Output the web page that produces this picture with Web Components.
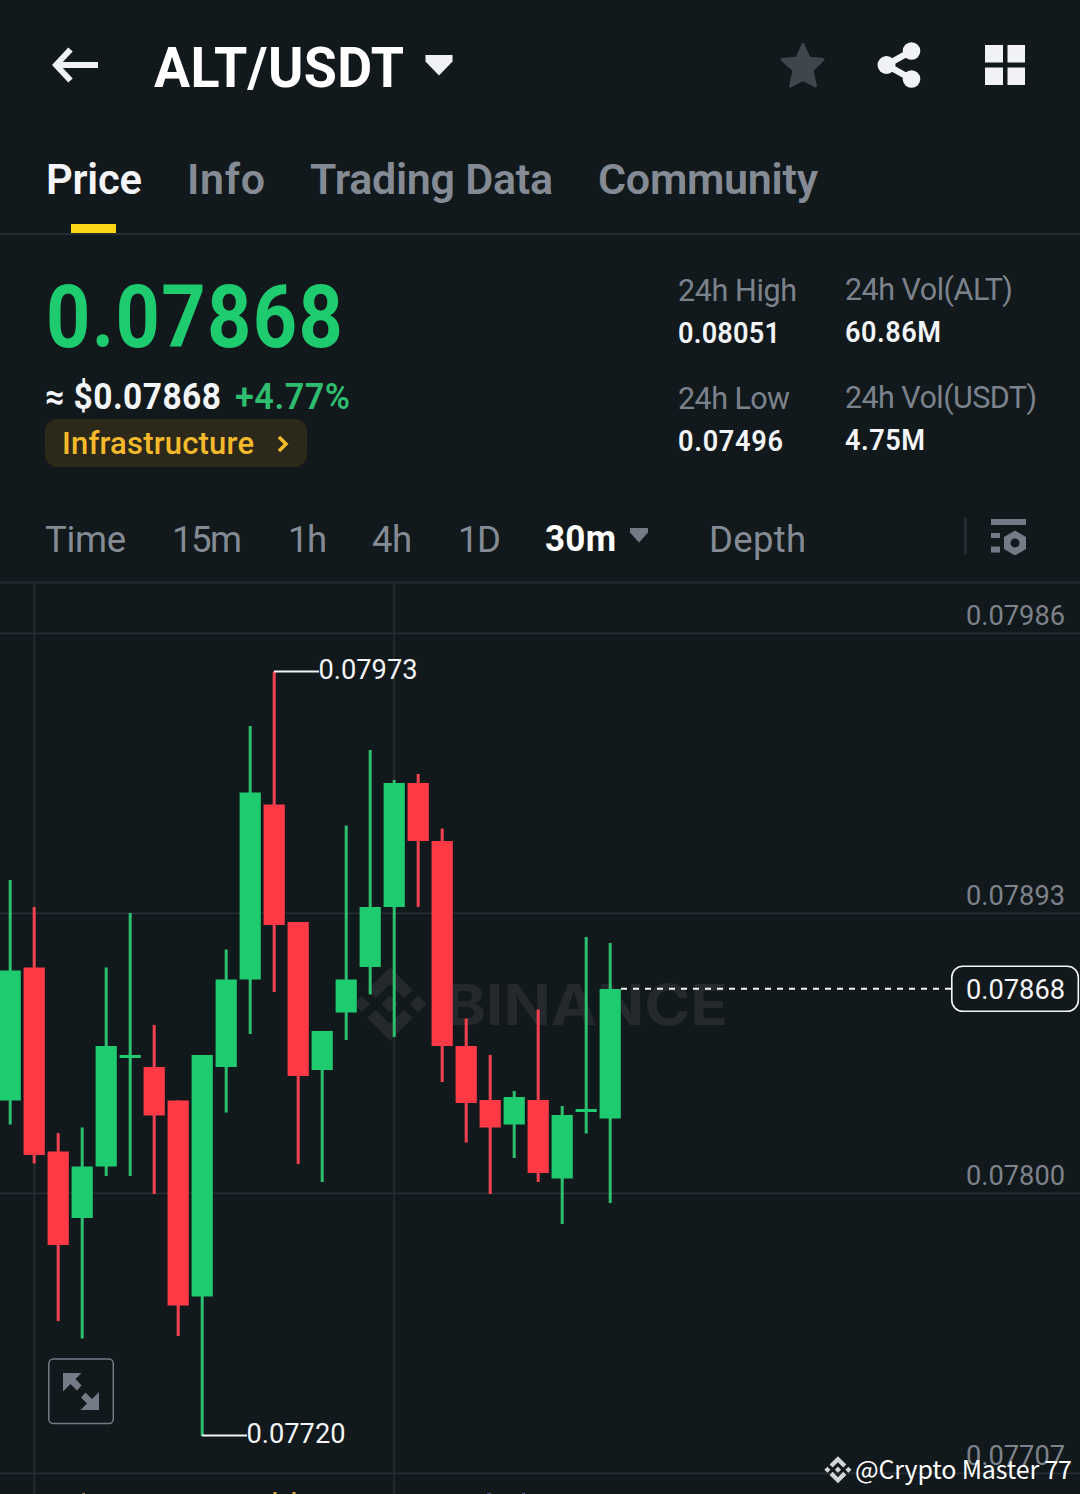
<!DOCTYPE html>
<html lang="en">
<head>
<meta charset="utf-8">
<title>ALT/USDT</title>
<style>
  body {
    margin: 0;
    background: #12191c;
    color: #f4f5f8;
    font-family: Roboto, "Liberation Sans", sans-serif;
  }
</style>
</head>
<body>
<market-page></market-page>

<script>
// Keeps a text on one line and tracks its letters to fill the given width.
// The squeeze attribute narrows the glyphs first.
class FitLabel extends HTMLElement {
  constructor() {
    super();
    const template = document.createElement('template');
    template.innerHTML = `
    <style>
      :host { display: block; white-space: nowrap; line-height: 1; }
      span { display: inline-block; transform-origin: left; }
    </style>
    <span><slot></slot></span>
    `;
    this.attachShadow({ mode: 'open' });
    this.shadowRoot.appendChild(template.content.cloneNode(true));
  }

  connectedCallback() {
    const width = Number(this.getAttribute('width'));
    const squeeze = Number(this.getAttribute('squeeze') || 1);
    const span = this.shadowRoot.querySelector('span');
    const natural = span.getBoundingClientRect().width;
    const count = this.textContent.length;
    span.style.letterSpacing = (width / squeeze - natural) / (count - 1) + 'px';
    span.style.transform = `scaleX(${squeeze})`;
    this.style.width = width + 'px';
  }
}

class MarketHeader extends HTMLElement {
  constructor() {
    super();
    const template = document.createElement('template');
    template.innerHTML = `
    <style>
      :host {
        display: flex;
        align-items: center;
        height: 130px;
        padding: 0 54px 0 52px;
      }
      svg { display: block; fill: #f1f2f7; }
      fit-label { font-size: 56px; font-weight: 700; color: #fff; margin: 5px 21px 0 56px; }
      .actions { display: flex; align-items: center; margin-left: auto; gap: 52px; }
    </style>
    <svg width="46" height="36" viewBox="0 0 46 36">
      <path d="M18.500 2.500 4 18l14.500 15.500M4.500 18H46" fill="none" stroke="#f1f2f7" stroke-width="6"/>
    </svg>
    <fit-label width="250" squeeze=".96">ALT/USDT</fit-label>
    <svg width="28" height="22" viewBox="0 0 28 22"><path d="M.5 1h27v6.500L14 21.500.5 7.500z"/></svg>
    <div class="actions">
      <svg width="46" height="46" viewBox="0 0 46 46">
        <path d="M24 2.500l6 13.500 14 1.500-11 11 3.500 15.500L24 37.500 11.500 44 15 28.500 3 17.500 18 16z" fill="#3f464d" stroke="#3f464d" stroke-width="3" stroke-linejoin="round"/>
      </svg>
      <svg width="44" height="46" viewBox="0 0 44 46">
        <path d="M34.500 9 9.500 23l25 14" fill="none" stroke="#f1f2f7" stroke-width="6.500"/>
        <circle cx="34.500" cy="9" r="8.800"/><circle cx="9.500" cy="23" r="9"/><circle cx="34.500" cy="37" r="8.800"/>
      </svg>
      <svg width="42" height="40" viewBox="0 0 42 40" style="margin-left:11px">
        <path d="M1 0h18v17.500H1zM23.500 0h17.500v17.500H23.500zM1 22.500h18V40H1zM23.500 22.500h17.500V40H23.500z"/>
      </svg>
    </div>
    `;
    this.attachShadow({ mode: 'open' });
    this.shadowRoot.appendChild(template.content.cloneNode(true));
  }
}

class MarketTabs extends HTMLElement {
  constructor() {
    super();
    const template = document.createElement('template');
    template.innerHTML = `
    <style>
      :host {
        display: flex;
        box-sizing: border-box;
        height: 105px;
        padding: 28px 0 0 46px;
        gap: 45px;
        border-bottom: 2px solid #272e32;
        font-size: 43px;
        font-weight: 600;
        color: #848b94;
      }
      .tab { display: flex; flex-direction: column; align-items: center; justify-content: space-between; }
      .active { color: #f4f5f8; }
      .active::after { content: ""; width: 45px; height: 9px; margin-right: 2px; background: #fcd515; }
    </style>
    <div class="tab active"><fit-label width="96" squeeze=".97">Price</fit-label></div>
    <div class="tab"><fit-label width="78">Info</fit-label></div>
    <div class="tab"><fit-label width="243">Trading Data</fit-label></div>
    <div class="tab"><fit-label width="220">Community</fit-label></div>
    `;
    this.attachShadow({ mode: 'open' });
    this.shadowRoot.appendChild(template.content.cloneNode(true));
  }
}

class StatItem extends HTMLElement {
  constructor() {
    super();
    const template = document.createElement('template');
    template.innerHTML = `
    <style>
      :host { display: flex; flex-direction: column; gap: 12px; height: 108px; box-sizing: border-box; }
      ::slotted([slot=label]) { font-size: 30.500px; color: #7c828b; }
      ::slotted([slot=value]) { font-size: 29.500px; font-weight: 600; color: #f4f5f8; }
    </style>
    <slot name="label"></slot>
    <slot name="value"></slot>
    `;
    this.attachShadow({ mode: 'open' });
    this.shadowRoot.appendChild(template.content.cloneNode(true));
  }
}

class PriceSummary extends HTMLElement {
  constructor() {
    super();
    const template = document.createElement('template');
    template.innerHTML = `
    <style>
      :host {
        display: flex;
        justify-content: space-between;
        box-sizing: border-box;
        height: 263px;
        padding: 37px 43px 0 45px;
      }
      .last { font-size: 87px; font-weight: 700; color: #1ecb6e; padding: 2px 0 0 1px; }
      .fiat { display: flex; gap: 14px; margin-top: 18px; font-size: 36px; font-weight: 700; }
      .change { color: #2ebd6e; font-weight: 600; }
      .tag {
        display: flex;
        align-items: center;
        box-sizing: border-box;
        width: 262px;
        height: 48px;
        margin-top: 4px;
        padding: 1px 18px 0 17px;
        justify-content: space-between;
        border-radius: 12px;
        background: #2c291a;
        color: #f5b92c;
        font-size: 31px;
        font-weight: 500;
      }
      .stats { display: flex; gap: 48px; padding-top: 4px; }
      .second { margin-top: -1px; }
    </style>
    <div>
      <fit-label class="last" width="297" squeeze=".89">0.07868</fit-label>
      <div class="fiat">
        <fit-label width="176" squeeze=".93">≈ $0.07868</fit-label>
        <fit-label class="change" width="115" squeeze=".95">+4.77%</fit-label>
      </div>
      <div class="tag">
        <fit-label width="192">Infrastructure</fit-label>
        <svg width="12" height="18" viewBox="0 0 12 18"><path d="M2 2l7 7-7 7" fill="none" stroke="#f5b92c" stroke-width="3.500"/></svg>
      </div>
    </div>
    <div class="stats">
      <div>
        <stat-item><fit-label slot="label" width="119">24h High</fit-label><fit-label slot="value" width="102" squeeze=".92">0.08051</fit-label></stat-item>
        <stat-item><fit-label slot="label" width="112">24h Low</fit-label><fit-label slot="value" width="105" squeeze=".92">0.07496</fit-label></stat-item>
      </div>
      <div class="second">
        <stat-item><fit-label slot="label" width="168">24h Vol(ALT)</fit-label><fit-label slot="value" width="96" squeeze=".92">60.86M</fit-label></stat-item>
        <stat-item><fit-label slot="label" width="192">24h Vol(USDT)</fit-label><fit-label slot="value" width="80" squeeze=".92">4.75M</fit-label></stat-item>
      </div>
    </div>
    `;
    this.attachShadow({ mode: 'open' });
    this.shadowRoot.appendChild(template.content.cloneNode(true));
  }
}

class IntervalBar extends HTMLElement {
  constructor() {
    super();
    const template = document.createElement('template');
    template.innerHTML = `
    <style>
      :host {
        display: flex;
        align-items: center;
        box-sizing: border-box;
        height: 86px;
        padding: 0 54px 3px 45px;
        border-bottom: 3px solid #1f262b;
        font-size: 36.500px;
        color: #848b94;
      }
      fit-label { margin-right: 46px; padding-top: 5px; }
      .active { color: #fff; font-weight: 700; margin-right: 13px; padding-top: 3px; }
      .caret { margin: -5px 60px 0 0; }
      .rule { width: 3px; height: 36px; margin: -4px 24px 0 auto; background: #262c31; }
      .settings { margin-top: -3px; }
      svg { fill: #747a86; }
    </style>
    <fit-label width="81">Time</fit-label>
    <fit-label width="70" style="margin-right:46px">15m</fit-label>
    <fit-label width="39" style="margin-right:45px">1h</fit-label>
    <fit-label width="40" style="margin-right:46px">4h</fit-label>
    <fit-label width="43" style="margin-right:44px">1D</fit-label>
    <fit-label class="active" width="71" squeeze=".96">30m</fit-label>
    <svg class="caret" width="20" height="15" viewBox="0 0 20 15"><path d="M1 0h18v4.500L10 14.500 1 4.500z"/></svg>
    <fit-label width="97">Depth</fit-label>
    <div class="rule"></div>
    <svg class="settings" width="35" height="36" viewBox="0 0 35 36">
      <path d="M0 0h35v6H0zM0 14h9v5H0zM0 27.500h9v6H0z"/>
      <path fill-rule="evenodd" d="M24 11.500 35 18v12l-11 6.500L13 30V18zM24 19.500a4.500 4.500 0 1 0 0 9 4.500 4.500 0 1 0 0-9z"/>
    </svg>
    `;
    this.attachShadow({ mode: 'open' });
    this.shadowRoot.appendChild(template.content.cloneNode(true));
  }
}

// [high, body top, body bottom, low, colour], in chart y units, one every 24px
const CANDLES = [
  [880, 970.5, 1100.5, 1124.5, 'up'],
  [907, 967.5, 1155, 1163.5, 'down'],
  [1133, 1151.5, 1245, 1321, 'down'],
  [1127.5, 1166.5, 1218, 1338.5, 'up'],
  [967.5, 1046, 1166.5, 1176, 'up'],
  [913, 1055, 1058, 1176, 'up'],
  [1025, 1067, 1115.5, 1194, 'down'],
  [1100.5, 1100.5, 1305.5, 1336, 'down'],
  [1055, 1055, 1296.5, 1436, 'up'],
  [949.5, 979.5, 1067, 1112.5, 'up'],
  [726, 792.5, 979.5, 1034, 'up'],
  [671.5, 804.5, 925, 992, 'down'],
  [922, 922, 1076, 1164, 'down'],
  [1031, 1031, 1070, 1182, 'up'],
  [825.5, 979.5, 1012.5, 1040, 'up'],
  [750, 907, 967, 994.5, 'up'],
  [780, 783, 907, 1037, 'up'],
  [774, 783, 841, 907, 'down'],
  [828.5, 841, 1046, 1082, 'down'],
  [1018.5, 1046, 1103, 1142.5, 'down'],
  [1055, 1100, 1127.5, 1194, 'down'],
  [1091, 1097, 1124.5, 1158, 'up'],
  [1009.5, 1100, 1173, 1182, 'down'],
  [1106, 1115, 1178.5, 1224, 'up'],
  [937, 1109, 1112, 1133.5, 'up'],
  [943, 989, 1118.5, 1203, 'up'],
];

// Diamond mark on a 126 unit box
const MARK = 'M38.700 53.200 63 28.900l24.400 24.400 14.100-14.200L63 .6 24.500 39.100zM.6 63l14.200-14.200L28.900 63 14.800 77.200zM38.700 72.800 63 97.100l24.400-24.400 14.100 14.200L63 125.400 24.500 86.900zM97.100 63l14.200-14.200L125.400 63l-14.100 14.200zM77.400 63 63 48.600 48.600 63 63 77.400z';

class CandleChart extends HTMLElement {
  constructor() {
    super();
    const candles = CANDLES.map(([high, top, bottom, low, dir], i) => {
      const x = 10.2 + i * 24;
      return `<g class="${dir}">
        <rect class="wick" x="${x - 1.5}" y="${high}" width="3" height="${low - high}"/>
        <rect x="${x - 10.6}" y="${top}" width="21.200" height="${bottom - top}"/>
      </g>`;
    }).join('');
    const axis = ['0.07986', '0.07893', '0.07800', '0.07707'].map((price, i) =>
      `<text class="axis" x="966" y="${625 + i * 280}" textLength="99" lengthAdjust="spacingAndGlyphs">${price}</text>`).join('');

    const template = document.createElement('template');
    template.innerHTML = `
    <style>
      :host { display: block; height: 910px; }
      svg { display: block; }
      text { font-size: 27.700px; fill: #f4f5f8; }
      .grid { stroke: #272d32; stroke-width: 1.700; }
      .axis { fill: #7d828a; }
      .mark { fill: #25292d; }
      .brand { font-family: Inter, sans-serif; font-weight: 700; font-size: 57px; fill: #25292d; }
      .up { fill: #1ecb6e; }
      .down { fill: #ff3a46; }
      .up .wick { fill: #2dc071; }
      .down .wick { fill: #f3414d; }
      .lead { stroke: #f4f5f8; stroke-width: 2; }
      .credit { font-family: "Noto Sans CJK SC", sans-serif; font-size: 25px; fill: #fff; }
    </style>
    <svg width="1080" height="910" viewBox="0 584 1080 910">
      <path class="grid" d="M34.300 584v910M394.200 584v910M0 633.300h1080M0 913.300h1080M0 1193.300h1080M0 1473.300h1080"/>
      <path class="mark" transform="translate(353 967) scale(.587)" d="${MARK}"/>
      <text class="brand" x="445" y="1024.500" textLength="283" lengthAdjust="spacingAndGlyphs">BINANCE</text>
      ${candles}
      ${axis}
      <path class="lead" d="M274 671.500h45M202 1435.500h45"/>
      <text x="318.500" y="679" textLength="99" lengthAdjust="spacingAndGlyphs">0.07973</text>
      <text x="246.500" y="1443" textLength="99" lengthAdjust="spacingAndGlyphs">0.07720</text>
      <path class="lead" stroke-dasharray="6 6" d="M621 988.700h330"/>
      <rect x="951.800" y="966.300" width="126.500" height="45" rx="11" fill="#12191c" stroke="#f4f5f8" stroke-width="1.600"/>
      <text x="966" y="999" textLength="99" lengthAdjust="spacingAndGlyphs">0.07868</text>

      <rect x="48.800" y="1359" width="64.500" height="64.500" rx="4.500" fill="none" stroke="#747a86" stroke-width="1.500"/>
      <g fill="#747a86">
        <path d="M63 1373h18.500l-6 6 6 6.500-4.500 5-6.500-6.500-7.500 7.500z"/>
        <path d="M99 1410H80.500l6.500-6.500-6-6 4.500-5 6.500 6.500 7-7z"/>
      </g>

      <path d="M82 1493.500h3" stroke="#8a8450" stroke-width="1"/>
      <path d="M273.500 1493h3M292.500 1493h3" stroke="#e0a53a" stroke-width="2"/>
      <path d="M487 1493.500h4M522 1493.500h3" stroke="#5b5590" stroke-width="1"/>

      <path transform="translate(824.200 1456) scale(.218)" fill="#d3d4d6" d="${MARK}"/>
      <text class="credit" x="855" y="1479" textLength="217">@Crypto Master 77</text>
    </svg>
    `;
    this.attachShadow({ mode: 'open' });
    this.shadowRoot.appendChild(template.content.cloneNode(true));
  }
}

class MarketPage extends HTMLElement {
  constructor() {
    super();
    const template = document.createElement('template');
    template.innerHTML = `
    <style>
      :host { display: flex; flex-direction: column; width: 1080px; height: 1494px; overflow: hidden; }
    </style>
    <market-header></market-header>
    <market-tabs></market-tabs>
    <price-summary></price-summary>
    <interval-bar></interval-bar>
    <candle-chart></candle-chart>
    `;
    this.attachShadow({ mode: 'open' });
    this.shadowRoot.appendChild(template.content.cloneNode(true));
  }
}

customElements.define('fit-label', FitLabel);
customElements.define('stat-item', StatItem);
customElements.define('market-header', MarketHeader);
customElements.define('market-tabs', MarketTabs);
customElements.define('price-summary', PriceSummary);
customElements.define('interval-bar', IntervalBar);
customElements.define('candle-chart', CandleChart);
customElements.define('market-page', MarketPage);
</script>
</body>
</html>
